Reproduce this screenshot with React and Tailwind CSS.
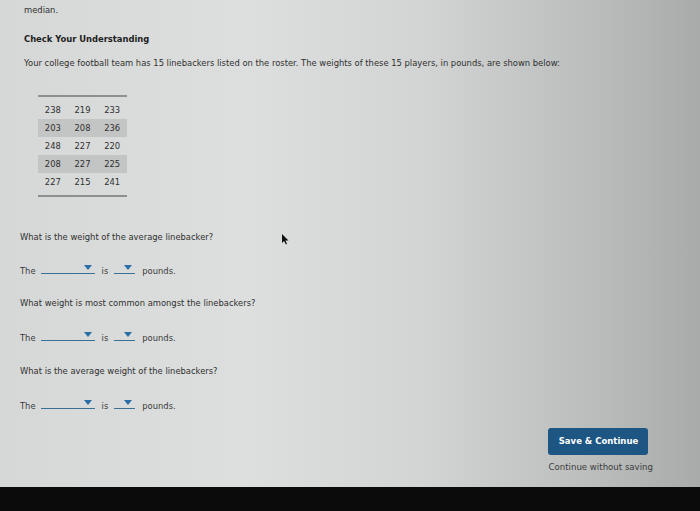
import React from "react";

function Drop({ w }) {
  return (
    <span className={`relative inline-block h-[10px] border-b border-[#3a6f96] ${w}`}>
      <svg className="absolute right-[3px] top-[1px]" width="8" height="6" viewBox="0 0 8 6">
        <path d="M0 0 L8 0 L4 5 Z" fill="#2a6ea8" />
      </svg>
    </span>
  );
}

function Answer() {
  return (
    <div className="flex items-end text-[8.4px] leading-none text-[#3a3a3a]">
      <span>The</span>
      <span className="ml-[5px]"><Drop w="w-[54px]" /></span>
      <span className="ml-[7px]">is</span>
      <span className="ml-[6px]"><Drop w="w-[21px]" /></span>
      <span className="ml-[7px]">pounds.</span>
    </div>
  );
}

const rows = [
  ["238", "219", "233"],
  ["203", "208", "236"],
  ["248", "227", "220"],
  ["208", "227", "225"],
  ["227", "215", "241"],
];

export default function App() {
  return (
    <div
      className="relative flex h-[511px] w-[700px] flex-col overflow-hidden bg-[linear-gradient(90deg,#d6d8d7_0%,#dddfde_35%,#d3d5d4_60%,#babdbc_85%,#a8abaa_100%)]"
      style={{ fontFamily: '"DejaVu Sans", Verdana, sans-serif' }}
    >
      <div className="flex-1 text-[#2f2f2f]">
        <div className="pl-[24px] pt-[4px] text-[8.4px]">median.</div>
        <div className="pl-[24px] pt-[16px] text-[8.4px] font-bold text-[#1e1e1e]">Check Your Understanding</div>
        <div className="pl-[24px] pt-[12px] text-[8.4px]">
          Your college football team has 15 linebackers listed on the roster. The weights of these 15 players, in pounds, are shown below:
        </div>
        <div className="ml-[38px] mt-[25px] w-[89px] border-y-2 border-[#8e908c] py-[4px]">
          {rows.map((r, i) => (
            <div
              key={i}
              className={`grid h-[18px] grid-cols-3 items-center text-center text-[8.4px] ${i % 2 === 1 ? "bg-[#c3c5c4]" : ""}`}
            >
              {r.map((c, j) => (
                <span key={j}>{c}</span>
              ))}
            </div>
          ))}
        </div>
        <div className="pl-[20px] pt-[34px] text-[8.4px]">What is the weight of the average linebacker?</div>
        <div className="pl-[20px] pt-[21px]"><Answer /></div>
        <div className="pl-[20px] pt-[21px] text-[8.4px]">What weight is most common amongst the linebackers?</div>
        <div className="pl-[20px] pt-[22px]"><Answer /></div>
        <div className="pl-[20px] pt-[22px] text-[8.4px]">What is the average weight of the linebackers?</div>
        <div className="pl-[20px] pt-[22px]"><Answer /></div>
        <div className="flex justify-end pr-[47px] pt-[17px]">
          <div className="flex flex-col items-start">
            <button className="h-[27px] w-[100px] rounded-[3px] bg-[#1d5683] text-[8.5px] font-bold text-white">Save &amp; Continue</button>
            <div className="mt-[6px] text-[8.6px] text-[#3c3c3c]">Continue without saving</div>
          </div>
        </div>
      </div>
      <div className="h-[24px] bg-[#0b0b0b]" />
      <svg className="absolute left-[281px] top-[234px]" width="8" height="11" viewBox="0 0 8 11">
        <path d="M1 0 L1 9 L3 7 L5 10.5 L6 10 L4.5 6.5 L7.5 6.5 Z" fill="#111" />
      </svg>
    </div>
  );
}
